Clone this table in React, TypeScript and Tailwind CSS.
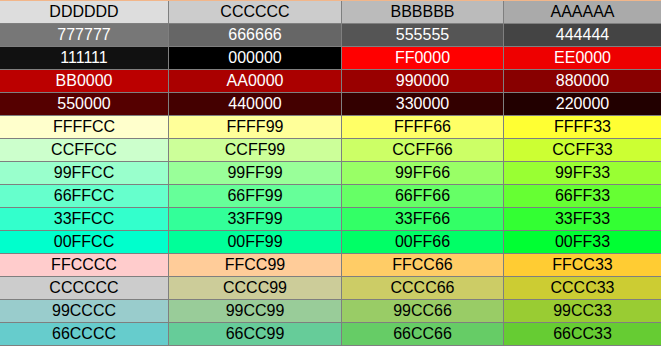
const rows: { hex: string; bg: string }[][] = [
  [
    { hex: "DDDDDD", bg: "bg-[#dddddd]" },
    { hex: "CCCCCC", bg: "bg-[#cccccc]" },
    { hex: "BBBBBB", bg: "bg-[#bbbbbb]" },
    { hex: "AAAAAA", bg: "bg-[#aaaaaa]" },
  ],
  [
    { hex: "777777", bg: "bg-[#777777]" },
    { hex: "666666", bg: "bg-[#666666]" },
    { hex: "555555", bg: "bg-[#555555]" },
    { hex: "444444", bg: "bg-[#444444]" },
  ],
  [
    { hex: "111111", bg: "bg-[#111111]" },
    { hex: "000000", bg: "bg-[#000000]" },
    { hex: "FF0000", bg: "bg-[#ff0000]" },
    { hex: "EE0000", bg: "bg-[#ee0000]" },
  ],
  [
    { hex: "BB0000", bg: "bg-[#bb0000]" },
    { hex: "AA0000", bg: "bg-[#aa0000]" },
    { hex: "990000", bg: "bg-[#990000]" },
    { hex: "880000", bg: "bg-[#880000]" },
  ],
  [
    { hex: "550000", bg: "bg-[#550000]" },
    { hex: "440000", bg: "bg-[#440000]" },
    { hex: "330000", bg: "bg-[#330000]" },
    { hex: "220000", bg: "bg-[#220000]" },
  ],
  [
    { hex: "FFFFCC", bg: "bg-[#ffffcc]" },
    { hex: "FFFF99", bg: "bg-[#ffff99]" },
    { hex: "FFFF66", bg: "bg-[#ffff66]" },
    { hex: "FFFF33", bg: "bg-[#ffff33]" },
  ],
  [
    { hex: "CCFFCC", bg: "bg-[#ccffcc]" },
    { hex: "CCFF99", bg: "bg-[#ccff99]" },
    { hex: "CCFF66", bg: "bg-[#ccff66]" },
    { hex: "CCFF33", bg: "bg-[#ccff33]" },
  ],
  [
    { hex: "99FFCC", bg: "bg-[#99ffcc]" },
    { hex: "99FF99", bg: "bg-[#99ff99]" },
    { hex: "99FF66", bg: "bg-[#99ff66]" },
    { hex: "99FF33", bg: "bg-[#99ff33]" },
  ],
  [
    { hex: "66FFCC", bg: "bg-[#66ffcc]" },
    { hex: "66FF99", bg: "bg-[#66ff99]" },
    { hex: "66FF66", bg: "bg-[#66ff66]" },
    { hex: "66FF33", bg: "bg-[#66ff33]" },
  ],
  [
    { hex: "33FFCC", bg: "bg-[#33ffcc]" },
    { hex: "33FF99", bg: "bg-[#33ff99]" },
    { hex: "33FF66", bg: "bg-[#33ff66]" },
    { hex: "33FF33", bg: "bg-[#33ff33]" },
  ],
  [
    { hex: "00FFCC", bg: "bg-[#00ffcc]" },
    { hex: "00FF99", bg: "bg-[#00ff99]" },
    { hex: "00FF66", bg: "bg-[#00ff66]" },
    { hex: "00FF33", bg: "bg-[#00ff33]" },
  ],
  [
    { hex: "FFCCCC", bg: "bg-[#ffcccc]" },
    { hex: "FFCC99", bg: "bg-[#ffcc99]" },
    { hex: "FFCC66", bg: "bg-[#ffcc66]" },
    { hex: "FFCC33", bg: "bg-[#ffcc33]" },
  ],
  [
    { hex: "CCCCCC", bg: "bg-[#cccccc]" },
    { hex: "CCCC99", bg: "bg-[#cccc99]" },
    { hex: "CCCC66", bg: "bg-[#cccc66]" },
    { hex: "CCCC33", bg: "bg-[#cccc33]" },
  ],
  [
    { hex: "99CCCC", bg: "bg-[#99cccc]" },
    { hex: "99CC99", bg: "bg-[#99cc99]" },
    { hex: "99CC66", bg: "bg-[#99cc66]" },
    { hex: "99CC33", bg: "bg-[#99cc33]" },
  ],
  [
    { hex: "66CCCC", bg: "bg-[#66cccc]" },
    { hex: "66CC99", bg: "bg-[#66cc99]" },
    { hex: "66CC66", bg: "bg-[#66cc66]" },
    { hex: "66CC33", bg: "bg-[#66cc33]" },
  ],
];

// rows 2-5 are dark, so their labels are white
const darkRows = [1, 2, 3, 4];

export default function App() {
  return (
    <div className="w-[661px] overflow-hidden bg-white font-['Liberation_Sans',Arial,sans-serif] text-[16px] leading-none">
      <div className="border-t border-[#f2b68a] grid grid-cols-[169px_173px_162px_1fr]">
        {rows.map((row, r) =>
          row.map((cell, c) => (
            <div
              key={`${r}-${c}`}
              className={`${cell.bg} h-[23px] flex items-center justify-center border-b border-[#7f7f7f] ${
                c < 3 ? "border-r" : ""
              } ${darkRows.includes(r) ? "text-white" : "text-black"}`}
            >
              {cell.hex}
            </div>
          ))
        )}
      </div>
    </div>
  );
}
